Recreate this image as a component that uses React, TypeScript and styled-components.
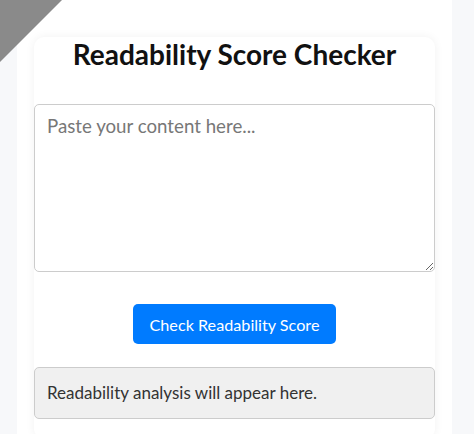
import { useState } from 'react';
import styled, { createGlobalStyle } from 'styled-components';

const GlobalStyle = createGlobalStyle`
  html, body {
    margin: 0;
    padding: 0;
    background: #f7f8fa;
    font-family: Lato, 'Open Sans', sans-serif;
  }
`;

export default function App() {
  const [text, setText] = useState('');
  const [result, setResult] = useState('Readability analysis will appear here.');

  const handleCheck = () => {
    const words = text.trim().split(/\s+/).filter(Boolean).length;
    if (!words) {
      setResult('Readability analysis will appear here.');
      return;
    }
    setResult(`Word count: ${words}`);
  };

  return (
    <>
      <GlobalStyle />
      <Corner />
      <Page>
        <Card>
          <Title>Readability Score Checker</Title>
          <TextArea
            placeholder="Paste your content here..."
            value={text}
            onChange={(e) => setText(e.target.value)}
          />
          <ButtonRow>
            <CheckButton onClick={handleCheck}>Check Readability Score</CheckButton>
          </ButtonRow>
          <Output>{result}</Output>
        </Card>
      </Page>
    </>
  );
}

const Corner = styled.div`
  position: fixed;
  top: 0;
  left: 0;
  width: 0;
  height: 0;
  border-top: 62px solid #8a8a8a;
  border-right: 62px solid transparent;
  z-index: 10;
`;

const Page = styled.div`
  width: 401px;
  min-height: 434px;
  margin-left: 17px;
  padding: 37px 17px 0;
  background: #fff;
`;

const Card = styled.div`
  background: #fff;
  border-radius: 10px;
  box-shadow: 0 0 10px rgba(0, 0, 0, 0.06);
  padding-bottom: 20px;
`;

const Title = styled.h1`
  margin: 0 0 33px;
  font-size: 28px;
  line-height: 34px;
  font-weight: 700;
  text-align: center;
  color: #111;
`;

const TextArea = styled.textarea`
  display: block;
  box-sizing: border-box;
  width: 100%;
  height: 168px;
  padding: 10px 12px;
  border: 1px solid #ccc;
  border-radius: 5px;
  font-family: inherit;
  font-size: 18.7px;
  color: #333;
  resize: vertical;

  &::placeholder {
    color: #777;
  }
`;

const ButtonRow = styled.div`
  display: flex;
  justify-content: center;
  margin: 32px 0 23px;
`;

const CheckButton = styled.button`
  width: 203px;
  height: 40px;
  border: none;
  border-radius: 5px;
  background: #007bff;
  color: #fff;
  font-family: inherit;
  font-size: 16.2px;
  cursor: pointer;
`;

const Output = styled.div`
  box-sizing: border-box;
  min-height: 51px;
  padding: 13px 12px;
  background: #f0f0f0;
  border: 1px solid #ccc;
  border-radius: 5px;
  font-size: 17px;
  line-height: 24px;
  color: #333;
`;
